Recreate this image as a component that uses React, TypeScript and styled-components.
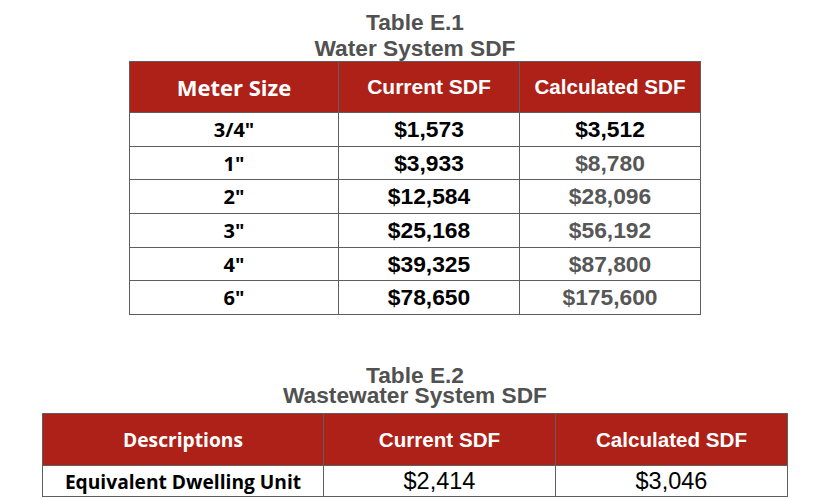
import React from "react";
import styled, { createGlobalStyle } from "styled-components";

const Global = createGlobalStyle`
  html, body { margin: 0; padding: 0; background: #ffffff; }
  body { width: 830px; height: 500px; overflow: hidden; }
`;

const RED = "#ad2119";
const LINE = "#5e5e5e";

const Page = styled.div`
  width: 830px;
  display: flex;
  flex-direction: column;
  align-items: center;
`;

const Caption = styled.div<{ $lh: number; $top: number }>`
  margin-top: ${(p) => p.$top}px;
  font-family: Arial, "Liberation Sans", sans-serif;
  font-weight: 700;
  font-size: 22.7px;
  line-height: ${(p) => p.$lh}px;
  color: #515151;
  text-align: center;
`;

const Grid = styled.div<{ $cols: string; $top: number }>`
  margin-top: ${(p) => p.$top}px;
  display: grid;
  grid-template-columns: ${(p) => p.$cols};
  border-left: 1px solid ${LINE};
  border-top: 1px solid ${LINE};
`;

const BaseCell = styled.div<{ $h: number }>`
  height: ${(p) => p.$h}px;
  box-sizing: border-box;
  display: flex;
  align-items: center;
  justify-content: center;
  border-right: 1px solid ${LINE};
  border-bottom: 1px solid ${LINE};
  white-space: nowrap;
`;

const HeadCell = styled(BaseCell)<{ $font: "open" | "arial"; $size: number }>`
  background: ${RED};
  color: #ffffff;
  font-weight: 700;
  font-size: ${(p) => p.$size}px;
  font-family: ${(p) =>
    p.$font === "open"
      ? `"Open Sans", "Noto Sans", sans-serif`
      : `Arial, "Liberation Sans", sans-serif`};
`;

const BodyCell = styled(BaseCell)<{
  $font: "open" | "arial";
  $size: number;
  $weight: number;
  $gray?: boolean;
}>`
  background: #ffffff;
  color: ${(p) => (p.$gray ? "#575757" : "#000000")};
  font-weight: ${(p) => p.$weight};
  font-size: ${(p) => p.$size}px;
  font-family: ${(p) =>
    p.$font === "open"
      ? `"Open Sans", "Noto Sans", sans-serif`
      : `Arial, "Liberation Sans", sans-serif`};
`;

const water = [
  { size: '3/4"', cur: "$1,573", calc: "$3,512", dark: true, h: 34 },
  { size: '1"', cur: "$3,933", calc: "$8,780", h: 33 },
  { size: '2"', cur: "$12,584", calc: "$28,096", h: 34 },
  { size: '3"', cur: "$25,168", calc: "$56,192", h: 34 },
  { size: '4"', cur: "$39,325", calc: "$87,800", h: 33 },
  { size: '6"', cur: "$78,650", calc: "$175,600", h: 34 },
];

export default function App() {
  return (
    <Page>
      <Global />
      <Caption $lh={26} $top={9}>
        Table E.1
        <br />
        Water System SDF
      </Caption>
      <Grid $cols="209px 181px 181px" $top={0}>
        <HeadCell $h={51} $font="open" $size={22}>
          Meter Size
        </HeadCell>
        <HeadCell $h={51} $font="arial" $size={21}>
          Current SDF
        </HeadCell>
        <HeadCell $h={51} $font="arial" $size={20.6}>
          Calculated SDF
        </HeadCell>
        {water.map((r) => (
          <React.Fragment key={r.size}>
            <BodyCell $h={r.h} $font="open" $size={20} $weight={700}>
              {r.size}
            </BodyCell>
            <BodyCell $h={r.h} $font="arial" $size={22.8} $weight={700}>
              {r.cur}
            </BodyCell>
            <BodyCell $h={r.h} $font="arial" $size={22.8} $weight={700} $gray={!r.dark}>
              {r.calc}
            </BodyCell>
          </React.Fragment>
        ))}
      </Grid>
      <Caption $lh={20} $top={50}>
        Table E.2
        <br />
        Wastewater System SDF
      </Caption>
      <Grid $cols="281px 232px 232px" $top={8}>
        <HeadCell $h={52} $font="open" $size={19.2}>
          Descriptions
        </HeadCell>
        <HeadCell $h={52} $font="arial" $size={20.6}>
          Current SDF
        </HeadCell>
        <HeadCell $h={52} $font="arial" $size={20.6}>
          Calculated SDF
        </HeadCell>
        <BodyCell $h={31} $font="open" $size={19.2} $weight={700}>
          Equivalent Dwelling Unit
        </BodyCell>
        <BodyCell $h={31} $font="arial" $size={23.5} $weight={400}>
          $2,414
        </BodyCell>
        <BodyCell $h={31} $font="arial" $size={23.5} $weight={400}>
          $3,046
        </BodyCell>
      </Grid>
    </Page>
  );
}
